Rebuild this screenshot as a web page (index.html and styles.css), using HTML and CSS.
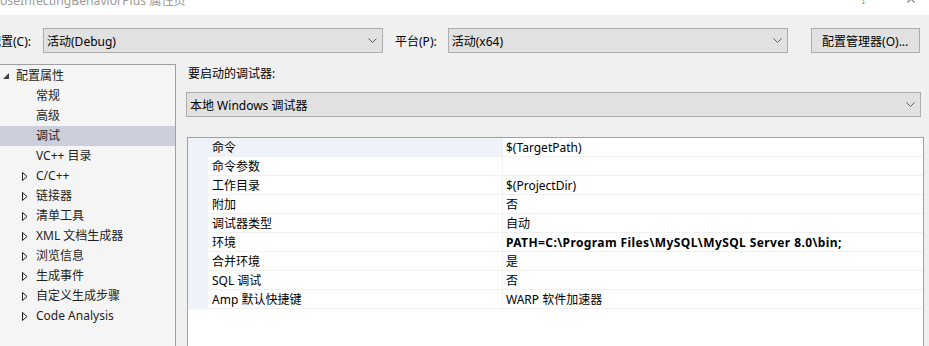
FILE: index.html
```html
<!DOCTYPE html>
<html lang="zh-CN">
<head>
    <meta charset="UTF-8">
    <meta name="viewport" content="width=device-width, initial-scale=1.0">
    <title>属性页</title>
    <link rel="stylesheet" href="styles.css">
</head>
<body>
    <div class="titlebar">
        <span class="title">oseInfectingBehaviorPlus 属性页</span>
        <span class="caption-btns">
            <span class="cap-help">?</span>
            <span class="cap-close">✕</span>
        </span>
    </div>

    <div class="toolbar">
        <span class="tb-label first">配置(C):</span>
        <div class="combo combo-config">
            <span>活动(Debug)</span>
            <svg class="chevron" width="9" height="5" viewBox="0 0 9 5"><path d="M0.5 0.5 L4.5 4.5 L8.5 0.5" fill="none" stroke="#5a5a5a" stroke-width="1"/></svg>
        </div>
        <span class="tb-label">平台(P):</span>
        <div class="combo combo-platform">
            <span>活动(x64)</span>
            <svg class="chevron" width="9" height="5" viewBox="0 0 9 5"><path d="M0.5 0.5 L4.5 4.5 L8.5 0.5" fill="none" stroke="#5a5a5a" stroke-width="1"/></svg>
        </div>
        <button class="btn">配置管理器(O)...</button>
    </div>

    <div class="main">
        <div class="tree">
            <div class="node root">
                <svg class="exp" width="6" height="6" viewBox="0 0 6 6"><polygon points="6,0 6,6 0,6" fill="#404040"/></svg>
                <span>配置属性</span>
            </div>
            <div class="node child"><span>常规</span></div>
            <div class="node child"><span>高级</span></div>
            <div class="node child selected"><span>调试</span></div>
            <div class="node child"><span>VC++ 目录</span></div>
            <div class="node child closed"><svg class="col" width="6" height="9" viewBox="0 0 6 9"><polygon points="0.5,0.5 5,4.5 0.5,8.5" fill="none" stroke="#1e1e1e" stroke-width="1"/></svg><span>C/C++</span></div>
            <div class="node child closed"><svg class="col" width="6" height="9" viewBox="0 0 6 9"><polygon points="0.5,0.5 5,4.5 0.5,8.5" fill="none" stroke="#1e1e1e" stroke-width="1"/></svg><span>链接器</span></div>
            <div class="node child closed"><svg class="col" width="6" height="9" viewBox="0 0 6 9"><polygon points="0.5,0.5 5,4.5 0.5,8.5" fill="none" stroke="#1e1e1e" stroke-width="1"/></svg><span>清单工具</span></div>
            <div class="node child closed"><svg class="col" width="6" height="9" viewBox="0 0 6 9"><polygon points="0.5,0.5 5,4.5 0.5,8.5" fill="none" stroke="#1e1e1e" stroke-width="1"/></svg><span>XML 文档生成器</span></div>
            <div class="node child closed"><svg class="col" width="6" height="9" viewBox="0 0 6 9"><polygon points="0.5,0.5 5,4.5 0.5,8.5" fill="none" stroke="#1e1e1e" stroke-width="1"/></svg><span>浏览信息</span></div>
            <div class="node child closed"><svg class="col" width="6" height="9" viewBox="0 0 6 9"><polygon points="0.5,0.5 5,4.5 0.5,8.5" fill="none" stroke="#1e1e1e" stroke-width="1"/></svg><span>生成事件</span></div>
            <div class="node child closed"><svg class="col" width="6" height="9" viewBox="0 0 6 9"><polygon points="0.5,0.5 5,4.5 0.5,8.5" fill="none" stroke="#1e1e1e" stroke-width="1"/></svg><span>自定义生成步骤</span></div>
            <div class="node child closed"><svg class="col" width="6" height="9" viewBox="0 0 6 9"><polygon points="0.5,0.5 5,4.5 0.5,8.5" fill="none" stroke="#1e1e1e" stroke-width="1"/></svg><span>Code Analysis</span></div>
        </div>

        <div class="pane">
            <div class="pane-label">要启动的调试器:</div>
            <div class="combo combo-debugger">
                <span>本地 Windows 调试器</span>
                <svg class="chevron" width="9" height="5" viewBox="0 0 9 5"><path d="M0.5 0.5 L4.5 4.5 L8.5 0.5" fill="none" stroke="#5a5a5a" stroke-width="1"/></svg>
            </div>

            <div class="grid">
                <div class="row active"><span class="gutter"></span><span class="name">命令</span><span class="value">$(TargetPath)</span></div>
                <div class="row"><span class="gutter"></span><span class="name">命令参数</span><span class="value"></span></div>
                <div class="row"><span class="gutter"></span><span class="name">工作目录</span><span class="value">$(ProjectDir)</span></div>
                <div class="row"><span class="gutter"></span><span class="name">附加</span><span class="value">否</span></div>
                <div class="row"><span class="gutter"></span><span class="name">调试器类型</span><span class="value">自动</span></div>
                <div class="row"><span class="gutter"></span><span class="name">环境</span><span class="value bold">PATH=C:\Program Files\MySQL\MySQL Server 8.0\bin;</span></div>
                <div class="row"><span class="gutter"></span><span class="name">合并环境</span><span class="value">是</span></div>
                <div class="row"><span class="gutter"></span><span class="name">SQL 调试</span><span class="value">否</span></div>
                <div class="row"><span class="gutter"></span><span class="name">Amp 默认快捷键</span><span class="value">WARP 软件加速器</span></div>
            </div>
        </div>
    </div>
</body>
</html>
```

FILE: styles.css
```css
html, body {
    margin: 0;
    padding: 0;
}

body {
    width: 929px;
    height: 346px;
    overflow: hidden;
    background-color: #f0f0f0;
    color: #1e1e1e;
    font-family: "Noto Sans", "Noto Sans CJK SC", sans-serif;
    font-size: 12px;
}

/* title bar, only its lower edge is visible */
.titlebar {
    display: flex;
    justify-content: space-between;
    height: 15px;
    overflow: hidden;
    background-color: #fff;
    color: #9a9a9a;
}

.titlebar .title {
    display: block;
    line-height: 16px;
    margin-top: -7px;
    font-size: 12.2px;
}

.caption-btns {
    display: flex;
    margin-top: -10px;
    line-height: 18px;
    font-size: 14px;
    color: #888;
}

.cap-help {
    margin-right: 38px;
}

.cap-close {
    margin-right: 12px;
}

/* configuration / platform row */
.toolbar {
    display: flex;
    align-items: center;
    height: 25px;
    margin-top: 13px;
}

.tb-label {
    color: #000;
    white-space: nowrap;
}

.tb-label.first {
    margin-left: -11px;
    margin-right: 12px;
}

.combo {
    display: flex;
    justify-content: space-between;
    align-items: center;
    box-sizing: border-box;
    height: 25px;
    padding: 0 5px 0 3px;
    background-color: #e1e1e1;
    border: 1px solid #adadad;
    color: #000;
}

.combo .chevron {
    display: block;
}

.combo-config {
    width: 340px;
    margin-right: 12px;
}

.combo-platform {
    width: 340px;
    margin-left: 11px;
}

.btn {
    box-sizing: border-box;
    width: 109px;
    height: 25px;
    margin-left: 23px;
    padding: 0;
    background-color: #e1e1e1;
    border: 1px solid #adadad;
    font-family: inherit;
    font-size: 12px;
    color: #000;
}

/* main area */
.main {
    display: flex;
    margin-top: 11px;
}

.tree {
    box-sizing: border-box;
    width: 177px;
    height: 300px;
    margin-left: -1px;
    padding-top: 1px;
    background-color: #f5f5f5;
    border: 1px solid #a0a0a0;
}

.tree .node {
    display: flex;
    align-items: center;
    height: 20px;
    line-height: 20px;
    white-space: nowrap;
}

.tree .node.root {
    padding-left: 3px;
}

.tree .node.root .exp {
    margin-right: 7px;
}

.tree .node.child {
    padding-left: 36px;
}

.tree .node.closed {
    padding-left: 22px;
}

.tree .node.closed .col {
    margin-right: 8px;
}

.tree .node.selected {
    background-color: #cccedb;
}

.pane {
    flex: 1;
    margin-left: 10px;
}

.pane-label {
    height: 20px;
    line-height: 20px;
    padding-left: 2px;
    color: #000;
}

.combo-debugger {
    width: 735px;
    margin-top: 8px;
    padding-left: 3px;
}

/* property grid */
.grid {
    box-sizing: border-box;
    width: 737px;
    height: 220px;
    margin-top: 20px;
    margin-left: 1px;
    background-color: #fff;
    border: 1px solid #a0a0a0;
    border-bottom: none;
}

.grid .row {
    display: flex;
    height: 19px;
}

.grid .gutter {
    width: 20px;
    flex-shrink: 0;
    background-color: #eef3fa;
}

.grid .name,
.grid .value {
    box-sizing: border-box;
    height: 19px;
    padding-top: 2px;
    line-height: 16px;
    border-bottom: 1px solid #f0f0f0;
    color: #000;
    white-space: nowrap;
}

.grid .name {
    width: 295px;
    padding-left: 4px;
    border-right: 1px solid #f0f0f0;
}

.grid .value {
    flex: 1;
    padding-left: 3px;
}

.grid .value.bold {
    font-weight: bold;
    letter-spacing: 0.4px;
}

.grid .row.active .name {
    background-color: #eef3fa;
}
```
